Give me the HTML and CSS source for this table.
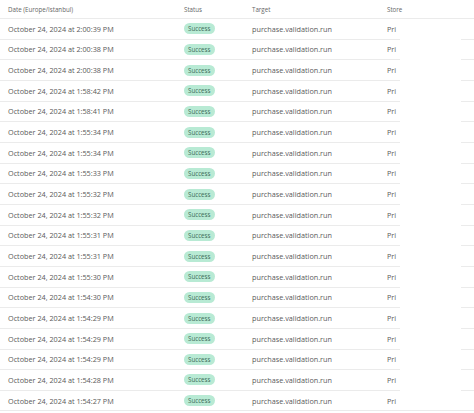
FILE: index.html
```html
<!DOCTYPE html>
<html>
<head>
<meta charset="utf-8">
<link rel="stylesheet" href="styles.css">
</head>
<body>
<div class="wrap">
<table class="grid">
<thead>
<tr><th class="c-date">Date (Europe/Istanbul)</th><th class="c-status">Status</th><th class="c-target">Target</th><th class="c-store">Store</th></tr>
</thead>
<tbody>
<tr><td>October 24, 2024 at 2:00:39 PM</td><td><span class="badge">Success</span></td><td>purchase.validation.run</td><td>Pri</td></tr>
<tr><td>October 24, 2024 at 2:00:38 PM</td><td><span class="badge">Success</span></td><td>purchase.validation.run</td><td>Pri</td></tr>
<tr><td>October 24, 2024 at 2:00:38 PM</td><td><span class="badge">Success</span></td><td>purchase.validation.run</td><td>Pri</td></tr>
<tr><td>October 24, 2024 at 1:58:42 PM</td><td><span class="badge">Success</span></td><td>purchase.validation.run</td><td>Pri</td></tr>
<tr><td>October 24, 2024 at 1:58:41 PM</td><td><span class="badge">Success</span></td><td>purchase.validation.run</td><td>Pri</td></tr>
<tr><td>October 24, 2024 at 1:55:34 PM</td><td><span class="badge">Success</span></td><td>purchase.validation.run</td><td>Pri</td></tr>
<tr><td>October 24, 2024 at 1:55:34 PM</td><td><span class="badge">Success</span></td><td>purchase.validation.run</td><td>Pri</td></tr>
<tr><td>October 24, 2024 at 1:55:33 PM</td><td><span class="badge">Success</span></td><td>purchase.validation.run</td><td>Pri</td></tr>
<tr><td>October 24, 2024 at 1:55:32 PM</td><td><span class="badge">Success</span></td><td>purchase.validation.run</td><td>Pri</td></tr>
<tr><td>October 24, 2024 at 1:55:32 PM</td><td><span class="badge">Success</span></td><td>purchase.validation.run</td><td>Pri</td></tr>
<tr><td>October 24, 2024 at 1:55:31 PM</td><td><span class="badge">Success</span></td><td>purchase.validation.run</td><td>Pri</td></tr>
<tr><td>October 24, 2024 at 1:55:31 PM</td><td><span class="badge">Success</span></td><td>purchase.validation.run</td><td>Pri</td></tr>
<tr><td>October 24, 2024 at 1:55:30 PM</td><td><span class="badge">Success</span></td><td>purchase.validation.run</td><td>Pri</td></tr>
<tr><td>October 24, 2024 at 1:54:30 PM</td><td><span class="badge">Success</span></td><td>purchase.validation.run</td><td>Pri</td></tr>
<tr><td>October 24, 2024 at 1:54:29 PM</td><td><span class="badge">Success</span></td><td>purchase.validation.run</td><td>Pri</td></tr>
<tr><td>October 24, 2024 at 1:54:29 PM</td><td><span class="badge">Success</span></td><td>purchase.validation.run</td><td>Pri</td></tr>
<tr><td>October 24, 2024 at 1:54:29 PM</td><td><span class="badge">Success</span></td><td>purchase.validation.run</td><td>Pri</td></tr>
<tr><td>October 24, 2024 at 1:54:28 PM</td><td><span class="badge">Success</span></td><td>purchase.validation.run</td><td>Pri</td></tr>
<tr><td>October 24, 2024 at 1:54:27 PM</td><td><span class="badge">Success</span></td><td>purchase.validation.run</td><td>Pri</td></tr>
</tbody>
</table>
<div class="mask"></div>
</div>
</body>
</html>
```
FILE: styles.css
```css
html, body {
  margin: 0;
  padding: 0;
  background: #ffffff;
}
.wrap {
  position: relative;
  width: 474px;
  height: 413px;
  overflow: hidden;
  font-family: "Open Sans", "Noto Sans", sans-serif;
}
.grid {
  width: 474px;
  border-collapse: collapse;
  table-layout: fixed;
}
.grid th, .grid td {
  text-align: left;
  padding: 0 0 0 8px;
  white-space: nowrap;
  overflow: hidden;
  border-bottom: 1px solid #ebebeb;
}
.grid th {
  height: 18px;
  font-size: 6.2px;
  font-weight: 400;
  color: #666;
}
.grid td {
  height: 19.67px;
  font-size: 7.25px;
  color: #5a5a5a;
}
.c-date { width: 168px; }
.c-status { width: 60px; }
.c-target { width: 127px; }
.badge {
  display: inline-block;
  background: #b8ead4;
  color: #3d6a58;
  font-size: 6.2px;
  line-height: 11px;
  height: 11px;
  padding: 0 4px;
  border-radius: 6px;
}
.mask {
  position: absolute;
  left: 400px;
  top: 21px;
  width: 61px;
  height: 389px;
  background: #ffffff;
}
```
